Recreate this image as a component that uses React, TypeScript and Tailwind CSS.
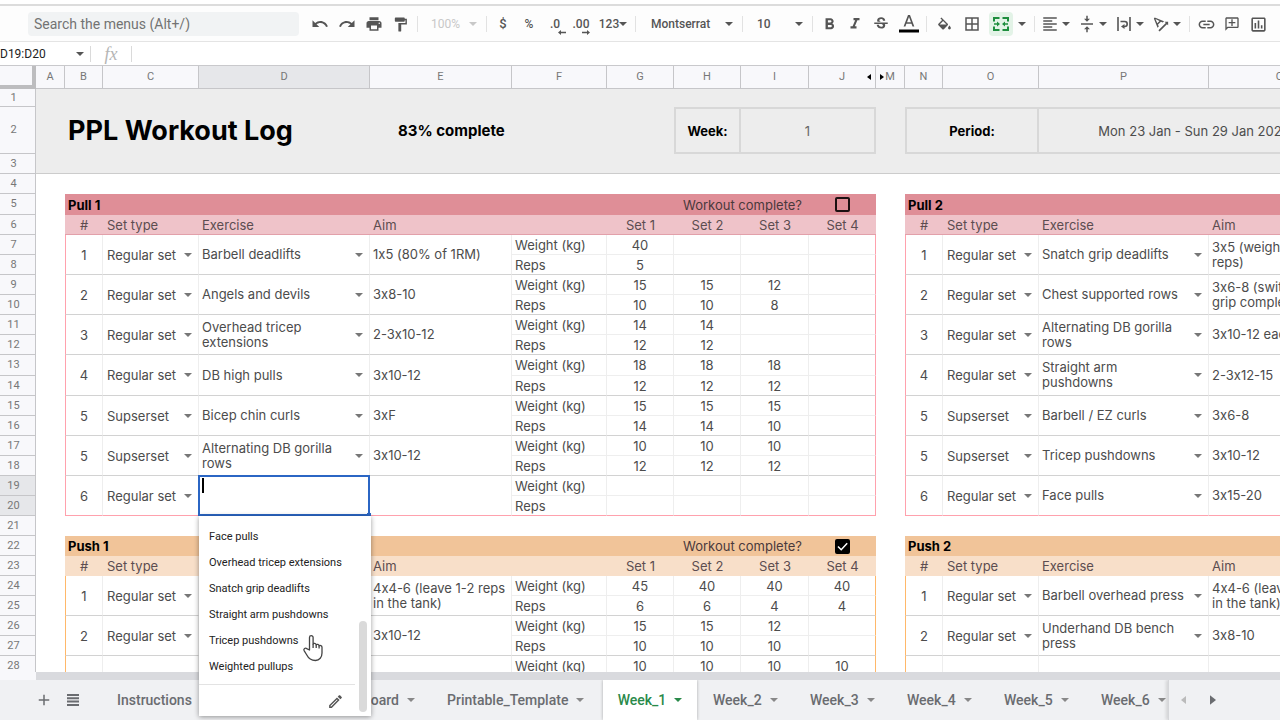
import type { ReactNode } from 'react'
import {
  MdAdd,
  MdBorderAll,
  MdFormatAlignLeft,
  MdFormatBold,
  MdFormatItalic,
  MdFormatPaint,
  MdInsertLink,
  MdOutlineAddComment,
  MdOutlineEdit,
  MdOutlineInsertChart,
  MdPrint,
  MdRedo,
  MdStrikethroughS,
  MdTextRotationAngleup,
  MdUndo,
  MdVerticalAlignCenter
} from 'react-icons/md'

type Theme = 'pink' | 'orange'

type Exercise = {
  no: string
  type: string
  name: string
  aim: string
  weight: string[]
  reps: string[]
  editing?: boolean
}

const themes = {
  pink: {
    title: 'bg-[#df8e97]',
    head: 'bg-[#efc3c9]',
    left: 'border-l border-l-rose-300',
    right: 'border-r border-r-rose-300',
    top: 'border-b-[#e2a0aa]'
  },
  orange: {
    title: 'bg-[#f1c499]',
    head: 'bg-[#f8dfc9]',
    left: 'border-l border-l-orange-300',
    right: 'border-r border-r-orange-300',
    top: 'border-b-[#f8dfc9]'
  }
}

const pull1: Exercise[] = [
  { no: '1', type: 'Regular set', name: 'Barbell deadlifts', aim: '1x5 (80% of 1RM)', weight: ['40', '', '', ''], reps: ['5', '', '', ''] },
  { no: '2', type: 'Regular set', name: 'Angels and devils', aim: '3x8-10', weight: ['15', '15', '12', ''], reps: ['10', '10', '8', ''] },
  { no: '3', type: 'Regular set', name: 'Overhead tricep extensions', aim: '2-3x10-12', weight: ['14', '14', '', ''], reps: ['12', '12', '', ''] },
  { no: '4', type: 'Regular set', name: 'DB high pulls', aim: '3x10-12', weight: ['18', '18', '18', ''], reps: ['12', '12', '12', ''] },
  { no: '5', type: 'Supserset', name: 'Bicep chin curls', aim: '3xF', weight: ['15', '15', '15', ''], reps: ['14', '14', '10', ''] },
  { no: '5', type: 'Supserset', name: 'Alternating DB gorilla rows', aim: '3x10-12', weight: ['10', '10', '10', ''], reps: ['12', '12', '12', ''] },
  { no: '6', type: 'Regular set', name: '', aim: '', weight: ['', '', '', ''], reps: ['', '', '', ''], editing: true }
]

const pull2 = [
  ['1', 'Regular set', 'Snatch grip deadlifts', '3x5 (weight for\nreps)'],
  ['2', 'Regular set', 'Chest supported rows', '3x6-8 (switch\ngrip completely)'],
  ['3', 'Regular set', 'Alternating DB gorilla rows', '3x10-12 each'],
  ['4', 'Regular set', 'Straight arm pushdowns', '2-3x12-15'],
  ['5', 'Supserset', 'Barbell / EZ curls', '3x6-8'],
  ['5', 'Supserset', 'Tricep pushdowns', '3x10-12'],
  ['6', 'Regular set', 'Face pulls', '3x15-20']
]

const push1: Exercise[] = [
  { no: '1', type: 'Regular set', name: '', aim: '4x4-6 (leave 1-2 reps\nin the tank)', weight: ['45', '40', '40', '40'], reps: ['6', '6', '4', '4'] },
  { no: '2', type: 'Regular set', name: '', aim: '3x10-12', weight: ['15', '15', '12', ''], reps: ['10', '10', '10', ''] },
  { no: '', type: '', name: '', aim: '', weight: ['10', '10', '10', '10'], reps: ['', '', '', ''] }
]

const push2 = [
  ['1', 'Regular set', 'Barbell overhead press', '4x4-6 (leave 1-2 reps\nin the tank)'],
  ['2', 'Regular set', 'Underhand DB bench press', '3x8-10'],
  ['', '', '', '']
]

const columns = ['A', 'B', 'C', 'D', 'E', 'F', 'G', 'H', 'I', 'J', 'M', 'N', 'O', 'P', 'Q']

const menuItems = [
  'Face pulls',
  'Overhead tricep extensions',
  'Snatch grip deadlifts',
  'Straight arm pushdowns',
  'Tricep pushdowns',
  'Weighted pullups'
]

const tabs = [
  { name: 'Instructions', width: 'w-[130px] pl-4' },
  { name: 'Dashboard', width: 'w-[200px] justify-end pr-4' },
  { name: 'Printable_Template', width: 'w-[172px] pl-4' },
  { name: 'Week_1', width: 'w-[94px] justify-center', active: true },
  { name: 'Week_2', width: 'w-[97px] pl-4' },
  { name: 'Week_3', width: 'w-[97px] pl-4' },
  { name: 'Week_4', width: 'w-[97px] pl-4' },
  { name: 'Week_5', width: 'w-[97px] pl-4' },
  { name: 'Week_6', width: 'w-[97px] pl-4' }
]

function Caret({ className = '' }: { className?: string }) {
  return (
    <svg viewBox="0 0 8 4" className={`h-1 w-2 shrink-0 ${className}`} fill="currentColor" aria-hidden="true">
      <path d="M0 0h8L4 4z" />
    </svg>
  )
}

function Tool({ label, width = 'w-[26px]', children }: { label: string; width?: string; children: ReactNode }) {
  return (
    <button type="button" aria-label={label} className={`flex h-7 shrink-0 items-center justify-center ${width}`}>
      {children}
    </button>
  )
}

function DropTool({ label, children }: { label: string; children: ReactNode }) {
  return (
    <button type="button" aria-label={label} className="flex h-7 w-[37px] shrink-0 items-center">
      <span className="flex w-6 justify-center">{children}</span>
      <Caret />
    </button>
  )
}

function Divider() {
  return <div className="mx-[3px] h-4 w-px shrink-0 bg-[#e2e2e2]" />
}

function ToolSelect({ label, value, width, text, disabled }: { label: string; value: string; width: string; text: string; disabled?: boolean }) {
  return (
    <label className={`relative flex h-7 shrink-0 items-center ${width} ${disabled ? 'text-[#c8c8c8]' : ''}`}>
      <select aria-label={label} disabled={disabled} className={`h-7 w-full appearance-none bg-transparent text-[12px] opacity-100 outline-none ${text}`}>
        <option>{value}</option>
      </select>
      <Caret className="pointer-events-none absolute right-1.5" />
    </label>
  )
}

function Toolbar() {
  return (
    <div className="flex h-9 shrink-0 items-center border-b border-[#e4e4e4] bg-[#fdfdfd] pt-px pl-7 text-[#555]">
      <input
        aria-label="Search the menus"
        placeholder="Search the menus (Alt+/)"
        className="mr-[7px] h-6 w-[271px] shrink-0 rounded bg-[#f1f3f4] px-1.5 text-[14px] text-[#555] outline-none placeholder:text-[#737373]"
      />
      <Tool label="Undo" width="w-[27px]"><MdUndo size={18} /></Tool>
      <Tool label="Redo" width="w-[27px]"><MdRedo size={18} /></Tool>
      <Tool label="Print" width="w-[27px]"><MdPrint size={18} /></Tool>
      <Tool label="Paint format" width="w-[27px]"><MdFormatPaint size={17} /></Tool>
      <Divider />
      <ToolSelect label="Zoom" value="100%" width="w-[62px]" text="pl-2.5" disabled />
      <Divider />
      <Tool label="Format as currency"><span className="text-[13px] font-medium">$</span></Tool>
      <Tool label="Format as percent"><span className="text-[12px] font-medium">%</span></Tool>
      <Tool label="Decrease decimal places">
        <span className="relative text-[12px] font-medium">
          .0
          <svg viewBox="0 0 8 5" className="absolute -right-1.5 -bottom-0.5 h-[5px] w-2" fill="currentColor">
            <path d="M0 2.5 3 0v1.8h5v1.4H3V5z" />
          </svg>
        </span>
      </Tool>
      <Tool label="Increase decimal places">
        <span className="relative text-[12px] font-medium">
          .00
          <svg viewBox="0 0 8 5" className="absolute -right-px -bottom-0.5 h-[5px] w-2" fill="currentColor">
            <path d="M8 2.5 5 0v1.8H0v1.4h5V5z" />
          </svg>
        </span>
      </Tool>
      <Tool label="More formats" width="w-[38px]">
        <span className="text-[12px] font-medium">123</span>
        <Caret />
      </Tool>
      <Divider />
      <ToolSelect label="Font" value="Montserrat" width="w-[100px]" text="pl-3 font-medium" />
      <Divider />
      <ToolSelect label="Font size" value="10" width="w-[63px]" text="pl-[11px] font-medium" />
      <Divider />
      <Tool label="Bold"><MdFormatBold size={19} /></Tool>
      <Tool label="Italic"><MdFormatItalic size={18} /></Tool>
      <Tool label="Strikethrough"><MdStrikethroughS size={18} /></Tool>
      <Tool label="Text colour" width="w-[29px]">
        <svg viewBox="0 0 20 20" className="h-5 w-5">
          <path d="M9 1 4.600 12.500h1.800L7.400 9.800h5.100l1 2.700h1.800L11 1zm-1 7.300 2-5.400 2 5.400z" fill="#555" />
          <path d="M0 15.500h20v3H0z" fill="#000" />
        </svg>
      </Tool>
      <Divider />
      <Tool label="Fill colour" width="w-7">
        <svg viewBox="0 0 24 24" className="h-[17px] w-[17px]" fill="currentColor">
          <path d="M16.560 10.940 7.620 2 6.210 3.410l2.380 2.380-5.150 5.150a1.490 1.490 0 0 0 0 2.120l5.500 5.500c.29.29.68.44 1.060.44s.77-.15 1.060-.44l5.500-5.500c.59-.58.59-1.530 0-2.120zM5.210 12 10 7.210 14.790 12zM19 13.500s-2 2.170-2 3.500a2 2 0 0 0 4 0c0-1.330-2-3.500-2-3.500z" />
        </svg>
      </Tool>
      <Tool label="Borders" width="w-7"><MdBorderAll size={18} /></Tool>
      <Tool label="Merge cells" width="w-[30px]">
        <span className="flex h-6 w-6 items-center justify-center rounded bg-[#e3f3e7] text-[#1e8e3e]">
          <svg viewBox="0 0 16 14" className="h-3.5 w-4" fill="none" stroke="currentColor" strokeWidth="2">
            <path d="M1 4.500V1h5.500M9.500 1H15v3.500M15 9.500V13H9.500M6.500 13H1V9.500" />
            <path d="M1 7h5M15 7h-5" strokeWidth="1.600" />
            <path d="M4 4.500 7 7 4 9.500zM12 4.500 9 7l3 2.500z" fill="currentColor" stroke="none" />
          </svg>
        </span>
      </Tool>
      <Tool label="Merge type" width="w-[15px]"><Caret className="mr-1" /></Tool>
      <Divider />
      <DropTool label="Horizontal align"><MdFormatAlignLeft size={18} /></DropTool>
      <DropTool label="Vertical align"><MdVerticalAlignCenter size={18} /></DropTool>
      <DropTool label="Text wrapping">
        <svg viewBox="0 0 14 14" className="h-3.5 w-3.5" fill="none" stroke="currentColor" strokeWidth="1.600">
          <path d="M1 0v14M13 0v14M3.500 4.500h4.200a2.500 2.500 0 0 1 0 5H6" />
          <path d="M7.500 7 4 9.500 7.500 12z" fill="currentColor" stroke="none" />
        </svg>
      </DropTool>
      <DropTool label="Text rotation"><MdTextRotationAngleup size={20} /></DropTool>
      <Divider />
      <Tool label="Insert link"><MdInsertLink size={19} /></Tool>
      <Tool label="Insert comment"><MdOutlineAddComment size={16} className="-scale-x-100" /></Tool>
      <Tool label="Insert chart"><MdOutlineInsertChart size={19} /></Tool>
    </div>
  )
}

function FormulaBar() {
  return (
    <div className="flex h-6 shrink-0 items-center border-b border-[#c9c9cc] bg-white">
      <input aria-label="Name box" defaultValue="D19:D20" className="w-[76px] shrink-0 bg-transparent text-[12px] text-[#222] outline-none" />
      <Caret className="text-[#555]" />
      <div className="ml-1.5 h-4 w-px bg-[#dadada]" />
      <label htmlFor="formula" className="w-10 text-center font-['Liberation_Serif',serif] text-[18px] leading-5 text-[#b5b5b5] italic">fx</label>
      <div className="h-4 w-px bg-[#dadada]" />
      <input id="formula" className="h-5 min-w-0 flex-1 bg-transparent px-2 text-[13px] outline-none" />
    </div>
  )
}

function RowNumber({ n, height = 'h-5', selected }: { n: number; height?: string; selected?: boolean }) {
  return (
    <th
      scope="row"
      className={`${height} border-r border-b border-[#c6c6c9] pr-2 text-center font-['Roboto',sans-serif] text-[11px] leading-4 font-normal text-[#777] ${
        selected ? 'bg-[#e6e7ea]' : 'bg-[#f8f8fb]'
      }`}
    >
      {n}
    </th>
  )
}

function TypeCell({ value, edge }: { value: string; edge: string }) {
  return (
    <td rowSpan={2} className={edge}>
      {value && (
        <label className="relative flex items-center">
          <select aria-label="Set type" defaultValue={value} className="h-[18px] w-full appearance-none bg-transparent pl-1 outline-none">
            <option>Regular set</option>
            <option>Supserset</option>
          </select>
          <Caret className="pointer-events-none absolute right-1.5 text-[#777]" />
        </label>
      )}
    </td>
  )
}

function ExerciseCell({ value, edge }: { value: string; edge: string }) {
  return (
    <td rowSpan={2} className={edge}>
      {value && (
        <button type="button" aria-haspopup="listbox" className="flex w-full items-center justify-between pr-1.5 pl-[3px] text-left leading-[15px]">
          <span className="max-w-[146px]">{value}</span>
          <Caret className="text-[#777]" />
        </button>
      )}
    </td>
  )
}

function EditorCell() {
  return (
    <td rowSpan={2} className="relative">
      <input aria-label="Exercise" className="absolute -top-px -left-px h-[calc(100%+1px)] w-[calc(100%+1px)] border-2 border-[#2b66c4] bg-white px-1 outline-none" />
      <span className="absolute top-0.5 left-[3px] h-[15px] w-0.5 bg-black" />
      <span className="absolute -right-px -bottom-px h-1 w-1 bg-[#2b66c4]" />
    </td>
  )
}

function TitleRow({ n, height, left, right, theme, done }: { n: number; height?: string; left: string; right: string; theme: Theme; done: boolean }) {
  const t = themes[theme]
  return (
    <tr className="text-[#4a393c]">
      <RowNumber n={n} height={height} />
      <td />
      <td colSpan={5} className={`${t.title} pl-[3px] font-bold text-black`}>{left}</td>
      <td colSpan={3} className={`${t.title} pr-[7px] text-right`}>
        <label htmlFor={`done-${n}`}>Workout complete?</label>
      </td>
      <td className={t.title}>
        <span className="relative mx-auto flex h-[15px] w-[15px]">
          <input
            id={`done-${n}`}
            type="checkbox"
            defaultChecked={done}
            className="h-[15px] w-[15px] appearance-none rounded-[2px] border-2 border-[#1c1011] checked:border-black checked:bg-black"
          />
          {done && (
            <svg viewBox="0 0 15 15" className="pointer-events-none absolute inset-0" fill="none" stroke="white" strokeWidth="1.500">
              <path d="m3 7.500 3.200 3.200 6-6.400" />
            </svg>
          )}
        </span>
      </td>
      <td />
      <td colSpan={4} className={`${t.title} pl-[3px] font-bold text-black`}>{right}</td>
    </tr>
  )
}

function HeadRow({ n, theme }: { n: number; theme: Theme }) {
  const t = themes[theme]
  const base = `${t.head} ${t.top} border-b`
  return (
    <tr className="text-[#5c4d50]">
      <RowNumber n={n} />
      <td />
      <td className={`${base} text-center`}>#</td>
      <td className={`${base} pl-1`}>Set type</td>
      <td className={`${base} pl-[3px]`}>{theme === 'pink' && 'Exercise'}</td>
      <td className={`${base} pl-[3px]`}>Aim</td>
      <td className={base} />
      {['Set 1', 'Set 2', 'Set 3', 'Set 4'].map((s) => (
        <td key={s} className={`${base} text-center`}>{s}</td>
      ))}
      <td />
      <td className={`${base} text-center`}>#</td>
      <td className={`${base} pl-1`}>Set type</td>
      <td className={`${base} pl-[3px]`}>Exercise</td>
      <td className={`${base} pl-[3px]`}>Aim</td>
    </tr>
  )
}

function Block({ start, theme, left, right }: { start: number; theme: Theme; left: Exercise[]; right: string[][] }) {
  const t = themes[theme]
  return (
    <>
      {left.map((ex, i) => {
        const n = start + i * 2
        const last = theme === 'pink' && i === left.length - 1
        const bottom = last ? 'border-b border-b-rose-300' : 'border-b border-b-[#d2d2d2]'
        const cell = `${bottom} border-r border-r-[#eeeeee]`
        const sub = 'border-b border-r border-b-[#eeeeee] border-r-[#eeeeee]'
        const [no, type, name, aim] = right[i]
        return [
          <tr key={n}>
            <RowNumber n={n} height={n === 13 ? 'h-[21px]' : 'h-5'} selected={ex.editing} />
            <td rowSpan={2} />
            <td rowSpan={2} className={`${t.left} ${cell} text-center`}>{ex.no}</td>
            <TypeCell value={ex.type} edge={cell} />
            {ex.editing ? <EditorCell /> : <ExerciseCell value={ex.name} edge={cell} />}
            <td rowSpan={2} className={`${cell} pl-[3px] leading-[15px] whitespace-pre`}>{ex.aim}</td>
            <td className={`${sub} pl-[3px]`}>Weight (kg)</td>
            {ex.weight.map((w, k) => (
              <td key={k} className={`text-center ${k === 3 ? `border-b border-b-[#eeeeee] ${t.right}` : sub}`}>{w}</td>
            ))}
            <td rowSpan={2} />
            <td rowSpan={2} className={`${t.left} ${cell} text-center`}>{no}</td>
            <TypeCell value={type} edge={cell} />
            <ExerciseCell value={name} edge={cell} />
            <td rowSpan={2} className={`${cell} pl-[3px] leading-[15px] whitespace-pre`}>{aim}</td>
          </tr>,
          <tr key={n + 1}>
            <RowNumber n={n + 1} selected={ex.editing} />
            <td className={`${cell} pl-[3px]`}>Reps</td>
            {ex.reps.map((r, k) => (
              <td key={k} className={`text-center ${k === 3 ? `${bottom} ${t.right}` : cell}`}>{r}</td>
            ))}
          </tr>
        ]
      })}
    </>
  )
}

function Sheet() {
  return (
    <table className="w-full min-w-[1351px] table-fixed border-separate border-spacing-0 font-['Inter',sans-serif] text-[13px] leading-[18px] text-[#4c4c4c] [font-feature-settings:'calt'_0]">
      <colgroup>
        <col className="w-9" />
        <col className="w-[29px]" />
        <col className="w-[38px]" />
        <col className="w-24" />
        <col className="w-[171px]" />
        <col className="w-[142px]" />
        <col className="w-[95px]" />
        <col className="w-[67px]" />
        <col className="w-[67px]" />
        <col className="w-[68px]" />
        <col className="w-[67px]" />
        <col className="w-[29px]" />
        <col className="w-[38px]" />
        <col className="w-24" />
        <col className="w-[170px]" />
        <col />
      </colgroup>
      <thead>
        <tr className="font-['Roboto',sans-serif] text-[11px] text-[#777]">
          <td className="h-[23px] border-r-4 border-b-4 border-[#bdbdbf] bg-[#f8f8fb]" />
          {columns.map((c) => (
            <th
              key={c}
              scope="col"
              className={`h-[23px] border-r border-b border-[#c6c6c9] font-normal ${c === 'D' ? 'bg-[#e6e7ea]' : 'bg-[#f8f8fb]'}`}
            >
              {c === 'J' && (
                <span className="relative block">
                  J
                  <svg viewBox="0 0 4 6" className="absolute top-1.5 right-1 h-1.5 w-1"><path d="M4 0v6L0 3z" /></svg>
                </span>
              )}
              {c === 'M' && (
                <span className="relative block">
                  M
                  <svg viewBox="0 0 4 6" className="absolute top-1.5 left-1 h-1.5 w-1"><path d="M0 0v6l4-3z" /></svg>
                </span>
              )}
              {c !== 'J' && c !== 'M' && c}
            </th>
          ))}
        </tr>
      </thead>
      <tbody>
        <tr className="bg-[#ededed]">
          <RowNumber n={1} height="h-[18px]" />
          <td colSpan={15} />
        </tr>
        <tr className="bg-[#ededed] text-black">
          <RowNumber n={2} height="h-[47px]" />
          <td />
          <td colSpan={3} className="pl-[3px] text-[27px] leading-8 font-bold whitespace-nowrap">PPL Workout Log</td>
          <td colSpan={3} className="pl-7 text-[15px] font-bold">83% complete</td>
          <td className="border-2 border-[#d8d8d8] text-center font-bold">Week:</td>
          <td colSpan={2} className="border-y-2 border-r-2 border-[#d8d8d8] text-center text-[#666]">1</td>
          <td />
          <td colSpan={2} className="border-2 border-[#d8d8d8] text-center font-bold">Period:</td>
          <td colSpan={2} className="border-y-2 border-r-2 border-[#d8d8d8] text-center text-[#4c4c4c]">Mon 23 Jan - Sun 29 Jan 2023</td>
        </tr>
        <tr className="bg-[#ededed]">
          <RowNumber n={3} />
          <td colSpan={15} className="border-b border-[#cccccc]" />
        </tr>
        <tr>
          <RowNumber n={4} />
          <td colSpan={15} />
        </tr>
        <TitleRow n={5} height="h-[21px]" left="Pull 1" right="Pull 2" theme="pink" done={false} />
        <HeadRow n={6} theme="pink" />
        <Block start={7} theme="pink" left={pull1} right={pull2} />
        <tr>
          <RowNumber n={21} />
          <td colSpan={15} />
        </tr>
        <TitleRow n={22} left="Push 1" right="Push 2" theme="orange" done />
        <HeadRow n={23} theme="orange" />
        <Block start={24} theme="orange" left={push1} right={push2} />
      </tbody>
    </table>
  )
}

// validation list that hangs under the edited cell
function Suggestions() {
  return (
    <div className="absolute top-[450px] left-[199px] z-20 h-[200px] w-[172px] bg-white text-[11px] text-[#222] shadow-[0_1px_5px_rgba(0,0,0,0.4)]">
      <ul role="listbox" aria-label="Exercises" className="pt-2">
        {menuItems.map((item) => (
          <li key={item} role="option" aria-selected="false" className="h-[26px] pl-2.5 leading-[26px]">
            {item}
          </li>
        ))}
      </ul>
      <div className="mt-1 mr-4 flex justify-end border-t border-[#e3e3e3] pt-2 pr-[11px]">
        <button type="button" aria-label="Edit list" className="text-[#555]">
          <MdOutlineEdit size={17} />
        </button>
      </div>
      <div className="absolute right-1 bottom-1 h-[91px] w-2 rounded-full bg-[#dadada]" />
      <svg viewBox="0 0 22 28" className="absolute top-[118px] left-[103px] h-7 w-[22px]" fill="white" stroke="#444" strokeWidth="1.300" strokeLinejoin="round">
        <path d="M7.500 16V3.500a1.800 1.800 0 0 1 3.600 0V10c.6-1 2.800-.9 3.100.8.7-.8 2.700-.5 2.900 1 .8-.7 2.900-.3 2.900 1.500V19c0 4-2.500 7.500-6.500 7.500-4.500 0-7-2-9-6L2.100 16.600c-.9-1.900 1.300-3.100 2.600-2z" />
        <path d="M11.100 10v4M14.200 10.800V14M17.100 11.800V14.500" />
      </svg>
    </div>
  )
}

function TabBar() {
  return (
    <footer className="flex h-10 shrink-0 bg-[#f0f1f3] text-[#6a6c70]">
      <button type="button" aria-label="Add sheet" className="ml-[31px] flex w-[26px] items-center justify-center"><MdAdd size={18} /></button>
      <button type="button" aria-label="All sheets" className="mr-[15px] ml-0.5 flex w-[27px] items-center justify-center">
        <svg viewBox="0 0 12 12" className="h-3 w-3" fill="currentColor"><path d="M0 0h12v2H0zM0 3.300h12v2H0zM0 6.600h12v2H0zM0 9.900h12v2H0z" /></svg>
      </button>
      <nav className="flex min-w-0 flex-1 overflow-hidden">
        {tabs.map((tab) => (
          <a
            key={tab.name}
            href={`#${tab.name}`}
            className={`flex h-10 shrink-0 items-center gap-2 text-[14px] font-medium ${tab.width} ${
              tab.active ? 'bg-white font-bold text-[#2a8a4a] shadow-[0_0_3px_rgba(0,0,0,0.3)]' : ''
            }`}
          >
            {tab.name}
            <Caret className={tab.active ? '' : 'text-[#888]'} />
          </a>
        ))}
      </nav>
      <div className="flex w-28 shrink-0 items-center border-l border-[#d5d6d9] pl-3 shadow-[-2px_0_3px_rgba(0,0,0,0.12)]">
        <button type="button" aria-label="Scroll tabs left" className="mr-6 text-[#bbb]">
          <svg viewBox="0 0 5 8" className="h-2 w-[5px]" fill="currentColor"><path d="M5 0v8L0 4z" /></svg>
        </button>
        <button type="button" aria-label="Scroll tabs right">
          <svg viewBox="0 0 5 8" className="h-2.5 w-[6px]" fill="currentColor"><path d="M0 0v8l5-4z" /></svg>
        </button>
      </div>
    </footer>
  )
}

export default function App() {
  return (
    <div className="flex h-screen flex-col overflow-hidden bg-white font-['Roboto',sans-serif]">
      <div className="h-1.5 shrink-0 border-b-2 border-[#dcdcdc]" />
      <Toolbar />
      <FormulaBar />
      <main className="relative flex min-h-0 flex-1 flex-col">
        <div className="min-h-0 flex-1 overflow-hidden">
          <Sheet />
        </div>
        <div className="h-2 shrink-0 bg-[#f8f8fb] pl-9">
          <div className="h-2 bg-[#d9dade]" />
        </div>
        <Suggestions />
      </main>
      <TabBar />
    </div>
  )
}
